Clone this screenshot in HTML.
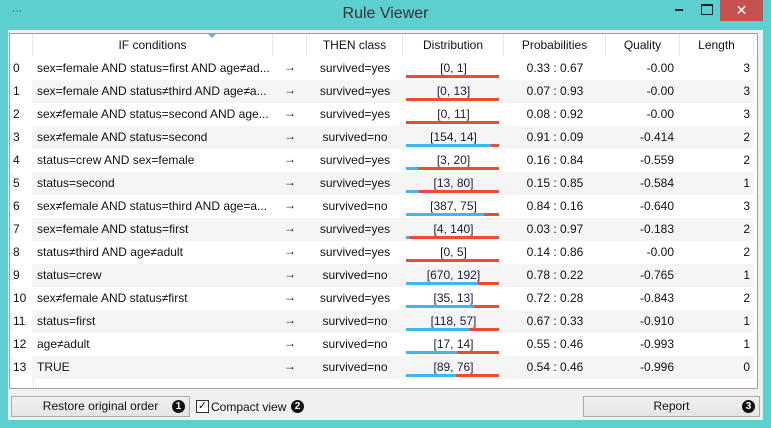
<!DOCTYPE html>
<html><head><style>
body{margin:0;width:771px;height:428px;overflow:hidden;background:#5ccfcf;font-family:"Liberation Sans",sans-serif;font-size:12px;color:#111;position:relative}
.title{position:absolute;left:0;top:5px;width:771px;text-align:center;font-size:16px;color:#333}
.close{position:absolute;left:720px;top:0;width:43px;height:21px;background:#c75050;color:#fff;text-align:center;font-size:14px;line-height:21px}
.client{position:absolute;left:8px;top:30px;width:755px;height:390px;background:#f0f0f0}
.tbl{position:absolute;left:9px;top:33px;width:749px;height:356px;background:#fff;border:1px solid #a0a0a0;box-sizing:border-box;overflow:hidden}
.row{position:absolute;left:0;height:23px;width:744px}
.c{position:absolute;top:0;height:23px;line-height:23px;white-space:nowrap;overflow:hidden}
.hd .c{border-right:1px solid #e3e8ef;height:22px;line-height:22px;text-align:center;box-sizing:border-box}
.bar{position:absolute;top:18px;left:396px;height:3px;width:93px;display:flex}
.b{background:#3fb6f0;height:3px}.r{background:#f04a2f;height:3px;flex:1}
.btn{position:absolute;top:396px;height:21px;border:1px solid #acacac;background:linear-gradient(#f0f0f0,#e5e5e5);box-sizing:border-box;text-align:center;line-height:19px}
.num{display:inline-block;width:13px;height:13px;border-radius:50%;background:#111;color:#fff;font-size:10px;line-height:13px;text-align:center;font-weight:bold;position:absolute}
</style></head><body>
<div style="position:absolute;left:12px;top:6px;font-size:10px;color:#333">⋯</div>
<div class="title">Rule Viewer</div>
<div style="position:absolute;left:675px;top:9px;width:8px;height:2px;background:#222"></div>
<div style="position:absolute;left:701px;top:4px;width:10px;height:8px;border:1px solid #222;border-top-width:2px"></div>
<div class="close">✕</div>
<div class="client"></div>
<div class="tbl" id="t">
<div class="row hd" style="top:0;border-bottom:1px solid #e3e8ef">
<div class="c" style="left:0;width:23px"></div>
<div class="c" style="left:23px;width:240px">IF conditions</div>
<div class="c" style="left:263px;width:34px"></div>
<div class="c" style="left:297px;width:96px">THEN class</div>
<div class="c" style="left:393px;width:101px">Distribution</div>
<div class="c" style="left:494px;width:102px">Probabilities</div>
<div class="c" style="left:596px;width:74px">Quality</div>
<div class="c" style="left:670px;width:74px">Length</div>
</div>
<div style="position:absolute;left:198px;top:0;border:4px solid transparent;border-top:4px solid #7aa9d6"></div>
<div style="position:absolute;left:0;top:23px;width:23px;height:340px;background:#fff;border-right:1px solid #e3e8ef"></div>
</div>
<div class="btn" style="left:11px;width:179px">Restore original order<span class="num" style="left:160px;top:3px">1</span></div>
<div style="position:absolute;left:196px;top:400px;width:11px;height:11px;border:1px solid #333;background:#fff;font-size:11px;line-height:11px;text-align:center">✓</div>
<div style="position:absolute;left:211px;top:400px;font-size:12px">Compact view</div>
<span class="num" style="left:291px;top:400px">2</span>
<div class="btn" style="left:583px;width:177px">Report<span class="num" style="left:158px;top:3px">3</span></div>
<script>
const d=[["sex=female AND status=first AND age≠ad...","survived=yes",0,1,"0.33 : 0.67","-0.00",3],
["sex=female AND status≠third AND age≠a...","survived=yes",0,13,"0.07 : 0.93","-0.00",3],
["sex≠female AND status=second AND age...","survived=yes",0,11,"0.08 : 0.92","-0.00",3],
["sex≠female AND status=second","survived=no",154,14,"0.91 : 0.09","-0.414",2],
["status=crew AND sex=female","survived=yes",3,20,"0.16 : 0.84","-0.559",2],
["status=second","survived=yes",13,80,"0.15 : 0.85","-0.584",1],
["sex≠female AND status=third AND age=a...","survived=no",387,75,"0.84 : 0.16","-0.640",3],
["sex=female AND status=first","survived=yes",4,140,"0.03 : 0.97","-0.183",2],
["status≠third AND age≠adult","survived=yes",0,5,"0.14 : 0.86","-0.00",2],
["status=crew","survived=no",670,192,"0.78 : 0.22","-0.765",1],
["sex≠female AND status≠first","survived=yes",35,13,"0.72 : 0.28","-0.843",2],
["status=first","survived=no",118,57,"0.67 : 0.33","-0.910",1],
["age≠adult","survived=no",17,14,"0.55 : 0.46","-0.993",1],
["TRUE","survived=no",89,76,"0.54 : 0.46","-0.996",0]];
let h="";d.forEach((r,i)=>{const t=23+i*23;const bg=i%2?"#f5f5f5":"#fff";const w=Math.round(93*r[2]/(r[2]+r[3]));
h+=`<div class="row" style="top:${t}px;background:${bg}"><div class="c" style="left:3px;background:#fff;width:19px">${i}</div>
<div class="c" style="left:27px;width:235px">${r[0]}</div><div class="c" style="left:263px;width:34px;text-align:center;line-height:21px">→</div>
<div class="c" style="left:297px;width:96px;text-align:center">${r[1]}</div>
<div class="c" style="left:393px;width:101px;text-align:center;color:#1a1a40">[${r[2]}, ${r[3]}]</div>
<div class="bar"><div class="b" style="width:${w}px"></div><div class="r"></div></div>
<div class="c" style="left:494px;width:102px;text-align:center">${r[4]}</div>
<div class="c" style="left:596px;width:68px;text-align:right">${r[5]}</div>
<div class="c" style="left:670px;width:70px;text-align:right">${r[6]}</div></div>`});
document.getElementById("t").insertAdjacentHTML("beforeend",h);
</script>
</body></html>
